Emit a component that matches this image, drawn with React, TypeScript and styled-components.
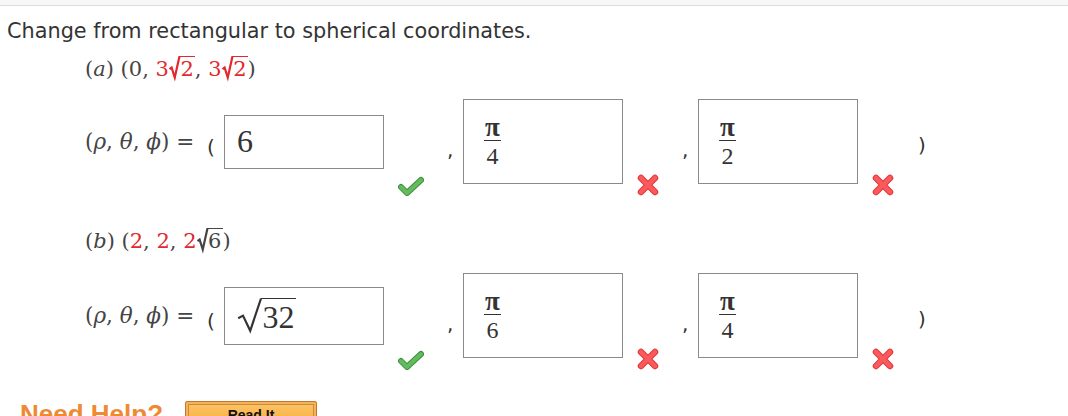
import styled, { createGlobalStyle } from 'styled-components';

const GlobalStyle = createGlobalStyle`
  body {
    margin: 0;
    background: #ffffff;
    font-family: "DejaVu Sans", Verdana, sans-serif;
    color: #333333;
  }
`;

const TopBar = styled.div`
  height: 5px;
  background: #f7f7f7;
  border-bottom: 1px solid #dcdcdc;
`;

const Page = styled.div`
  padding: 0 0 0 7px;
`;

const Prompt = styled.p`
  margin: 13px 0 0;
  font-size: 20.8px;
  line-height: 24px;
  color: #333333;
  white-space: nowrap;
`;

const Part = styled.div<{ $top: number }>`
  margin-top: ${({ $top }) => $top}px;
  padding-left: 78px;
`;

const Given = styled.div`
  font-family: "DejaVu Serif", "Liberation Serif", serif;
  font-size: 21px;
  line-height: 26px;
  color: #444444;
  white-space: nowrap;
`;

const Red = styled.span`
  color: #e3282e;
`;

const Italic = styled.i`
  font-style: italic;
`;

const Radical = styled.span`
  display: inline-flex;
  align-items: stretch;
  vertical-align: -0.12em;
`;

const RadicalSign = styled.svg<{ $w: number }>`
  width: ${({ $w }) => $w}em;
  height: 1.05em;
  overflow: visible;
  flex: none;
`;

const Radicand = styled.span`
  border-top: 1.3px solid currentColor;
  line-height: 1em;
  padding: 0.05em 0.05em 0;
`;

const Row = styled.div<{ $top: number }>`
  display: flex;
  align-items: center;
  height: 85px;
  margin-top: ${({ $top }) => $top}px;
`;

const Label = styled.span`
  width: 122px;
  font-family: "DejaVu Serif", "Liberation Serif", serif;
  font-size: 21.5px;
  color: #444444;
  white-space: nowrap;
`;

const Punct = styled.span<{ $width: number; $pad: number; $shift: number }>`
  width: ${({ $width }) => $width}px;
  padding-left: ${({ $pad }) => $pad}px;
  box-sizing: border-box;
  font-size: 20px;
  line-height: 20px;
  color: #333333;
  margin-top: ${({ $shift }) => $shift}px;
`;

const AnswerBox = styled.div<{ $height: number }>`
  box-sizing: border-box;
  width: 160px;
  height: ${({ $height }) => $height}px;
  border: 1px solid #8a8a8a;
  display: flex;
  align-items: center;
  padding-left: 12px;
  font-family: "Liberation Serif", "DejaVu Serif", serif;
  font-size: 32px;
  color: #333333;
`;

const Fraction = styled.span`
  display: inline-flex;
  flex-direction: column;
  align-items: center;
  margin-left: 8px;
  font-family: "Liberation Serif", "DejaVu Serif", serif;
  font-size: 24px;
  line-height: 19px;
`;

const Numerator = styled.span`
  font-size: 27px;
  font-weight: bold;
  padding: 0 1px 3px;
  border-bottom: 1.2px solid #333333;
`;

const Denominator = styled.span`
  padding-top: 6px;
`;

const Mark = styled.span<{ $gap: number }>`
  align-self: flex-end;
  margin: 0 0 -12px ${({ $gap }) => $gap}px;
  display: flex;
`;

const HelpBar = styled.div`
  display: flex;
  align-items: flex-start;
  margin-top: 43px;
  padding-left: 13px;
  gap: 22px;
`;

const HelpText = styled.span`
  font-family: "Liberation Sans", Arial, sans-serif;
  font-weight: bold;
  font-size: 26px;
  line-height: 30px;
  color: #ee8a33;
  margin-top: -2px;
`;

const ReadButton = styled.button`
  width: 132px;
  height: 28px;
  border: 1px solid #c0772b;
  border-radius: 2px;
  background: linear-gradient(#fcc667, #f9a93a);
  box-shadow: inset 0 0 0 2px #f6b25c, inset 0 0 0 3px #c98b3d;
  font-family: "Liberation Sans", Arial, sans-serif;
  font-weight: bold;
  font-size: 14px;
  color: #111111;
  padding: 0;
`;

const Check = () => (
  <svg width="26" height="20" viewBox="0 0 26 20">
    <polyline points="3,11 9,17 23,4" fill="none" stroke="#3f8f3f" strokeWidth="6" strokeLinecap="round" strokeLinejoin="round" />
    <polyline points="3,11 9,17 23,4" fill="none" stroke="#62bb5c" strokeWidth="4" strokeLinecap="round" strokeLinejoin="round" />
  </svg>
);

const Cross = () => (
  <svg width="22" height="22" viewBox="0 0 22 22">
    <path d="M4 4 L18 18 M18 4 L4 18" stroke="#e0363b" strokeWidth="6.5" strokeLinecap="round" />
    <path d="M4 4 L18 18 M18 4 L4 18" stroke="#fb5a5c" strokeWidth="4.5" strokeLinecap="round" />
  </svg>
);

const Sqrt = ({ children, w = 0.5 }: { children: React.ReactNode; w?: number }) => (
  <Radical>
    <RadicalSign $w={w} viewBox="0 0 20 40" preserveAspectRatio="none">
      <path d="M1 24 L5 21 L11 39 L20 0.6" fill="none" stroke="currentColor" strokeWidth="2.2" strokeLinejoin="miter" vectorEffect="non-scaling-stroke" />
    </RadicalSign>
    <Radicand>{children}</Radicand>
  </Radical>
);

const PiOver = ({ d }: { d: number }) => (
  <Fraction>
    <Numerator>π</Numerator>
    <Denominator>{d}</Denominator>
  </Fraction>
);

interface AnswerRowProps {
  top: number;
  firstHeight: number;
  first: React.ReactNode;
  second: number;
  third: number;
}

const AnswerRow = ({ top, firstHeight, first, second, third }: AnswerRowProps) => (
  <Row $top={top}>
    <Label>
      (<Italic>ρ</Italic>, <Italic>θ</Italic>, <Italic>ϕ</Italic>) =
    </Label>
    <Punct $width={17} $pad={0} $shift={10}>(</Punct>
    <AnswerBox $height={firstHeight}>{first}</AnswerBox>
    <Mark $gap={14}><Check /></Mark>
    <Punct $width={39} $pad={23} $shift={16}>,</Punct>
    <AnswerBox $height={85}><PiOver d={second} /></AnswerBox>
    <Mark $gap={14}><Cross /></Mark>
    <Punct $width={39} $pad={23} $shift={16}>,</Punct>
    <AnswerBox $height={85}><PiOver d={third} /></AnswerBox>
    <Mark $gap={14}><Cross /></Mark>
    <Punct $width={40} $pad={24} $shift={6}>)</Punct>
  </Row>
);

export default function App() {
  return (
    <>
      <GlobalStyle />
      <TopBar />
      <Page>
        <Prompt>Change from rectangular to spherical coordinates.</Prompt>
        <Part $top={13}>
          <Given>
            (<Italic>a</Italic>) (0, <Red>3<Sqrt>2</Sqrt></Red>, <Red>3<Sqrt>2</Sqrt></Red>)
          </Given>
          <AnswerRow top={17} firstHeight={54} first="6" second={4} third={2} />
        </Part>
        <Part $top={44}>
          <Given>
            (<Italic>b</Italic>) (<Red>2</Red>, <Red>2</Red>, <Red>2</Red><Sqrt>6</Sqrt>)
          </Given>
          <AnswerRow top={19} firstHeight={58} first={<Sqrt w={0.75}>32</Sqrt>} second={6} third={4} />
        </Part>
        <HelpBar>
          <HelpText>Need Help?</HelpText>
          <ReadButton>Read It</ReadButton>
        </HelpBar>
      </Page>
    </>
  );
}
